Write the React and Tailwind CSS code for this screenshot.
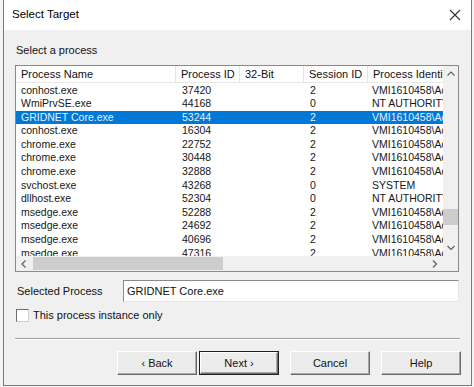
import React from "react";

const rows = [
  ["conhost.exe", "37420", "", "2", "VMI1610458\\Administrator"],
  ["WmiPrvSE.exe", "44168", "", "0", "NT AUTHORITY\\SYSTEM"],
  ["GRIDNET Core.exe", "53244", "", "2", "VMI1610458\\Administrator", true],
  ["conhost.exe", "16304", "", "2", "VMI1610458\\Administrator"],
  ["chrome.exe", "22752", "", "2", "VMI1610458\\Administrator"],
  ["chrome.exe", "30448", "", "2", "VMI1610458\\Administrator"],
  ["chrome.exe", "32888", "", "2", "VMI1610458\\Administrator"],
  ["svchost.exe", "43268", "", "0", "SYSTEM"],
  ["dllhost.exe", "52304", "", "0", "NT AUTHORITY\\SYSTEM"],
  ["msedge.exe", "52288", "", "2", "VMI1610458\\Administrator"],
  ["msedge.exe", "24692", "", "2", "VMI1610458\\Administrator"],
  ["msedge.exe", "40696", "", "2", "VMI1610458\\Administrator"],
  ["msedge.exe", "47316", "", "2", "VMI1610458\\Administrator"],
];

function Chevron({ dir }) {
  const pts = {
    up: "0.5,4.5 4,1 7.5,4.5",
    down: "0.5,1 4,4.5 7.5,1",
    left: "4.5,0.5 1,4 4.5,7.5",
    right: "1,0.5 4.5,4 1,7.5",
  }[dir];
  const horiz = dir === "left" || dir === "right";
  return (
    <svg width={horiz ? 6 : 8} height={horiz ? 8 : 6} viewBox={horiz ? "0 0 6 8" : "0 0 8 6"}>
      <polyline points={pts} fill="none" stroke="#606060" strokeWidth="1.2" />
    </svg>
  );
}

function Button({ children, def, className = "" }) {
  return (
    <div
      className={
        "w-[80px] h-[24px] flex " +
        (def ? "border border-[#202020] " : "") +
        className
      }
    >
      <div className="flex-1 flex items-center justify-center bg-[#ececec] border-t border-l border-white border-b border-r border-b-[#6a6a6a] border-r-[#6a6a6a] shadow-[inset_-1px_-1px_0_#a8a8a8] text-[11px] text-[#111]">
        {children}
      </div>
    </div>
  );
}

export default function App() {
  const colW = ["w-[160px]", "w-[64px]", "w-[64px]", "w-[64px]", "w-[90px]"];
  return (
    <div
      className="w-[474px] h-[387px] flex bg-[#f4f4f4] overflow-hidden"
      style={{ fontFamily: '"Liberation Sans", Arial, sans-serif' }}
    >
      <div className="w-[3px] shrink-0 bg-[#f4f4f4]" />
      <div className="w-[469px] h-[386px] shrink-0 flex flex-col border-l border-r border-b border-[#7a7a7a]">
        {/* Title bar */}
        <div className="h-[30px] bg-white flex items-center justify-between pl-[8px] pr-[10px]">
          <span className="text-[11.5px] text-black">Select Target</span>
          <svg width="12" height="12" viewBox="0 0 12 12">
            <path d="M1 1 L11 11 M11 1 L1 11" stroke="#333" strokeWidth="1.1" />
          </svg>
        </div>
        {/* Body */}
        <div className="flex-1 bg-[#f0f0f0] flex flex-col pl-[11px] pr-[10px]">
          <div className="mt-[13px] h-[14px] leading-[14px] text-[11px] text-[#111] pl-[1px]">
            Select a process
          </div>
          {/* List box */}
          <div className="mt-[8px] w-[444px] h-[207px] border border-[#8a8a8a] bg-white flex flex-col">
            <div className="flex h-[190px]">
              <div className="w-[427px] overflow-hidden flex flex-col">
                {/* Header */}
                <div className="flex h-[17px] shrink-0 border-b border-[#e8e8e8] text-[11px] text-[#111]">
                  {["Process Name", "Process ID", "32-Bit", "Session ID", "Process Identity"].map(
                    (h, i) => (
                      <div
                        key={h}
                        className={
                          colW[i] +
                          " shrink-0 flex items-center whitespace-nowrap overflow-hidden border-r border-[#e3e3e3] " +
                          (i === 0 ? "pl-[5px]" : "pl-[5px]")
                        }
                      >
                        {h}
                      </div>
                    )
                  )}
                </div>
                {/* Rows */}
                <div className="pt-[0.5px]">
                  {rows.map((r, idx) => {
                    const sel = r[5];
                    return (
                      <div
                        key={idx}
                        className={
                          "flex h-[13.6px] text-[10.5px] leading-[13.6px] whitespace-nowrap " +
                          (sel ? "bg-[#0078d7] text-[#e4f1fc]" : "text-[#161616]")
                        }
                      >
                        {r.slice(0, 5).map((c, i) => (
                          <div
                            key={i}
                            className={colW[i] + " shrink-0 overflow-hidden " + (i === 0 ? "pl-[5px]" : i === 4 ? "pl-[4px]" : "pl-[6px]")}
                          >
                            {c}
                          </div>
                        ))}
                      </div>
                    );
                  })}
                </div>
              </div>
              {/* Vertical scrollbar */}
              <div className="w-[15px] bg-[#f0f0f0] flex flex-col">
                <div className="h-[17px] flex items-center justify-center pb-[2px]">
                  <Chevron dir="up" />
                </div>
                <div className="flex-1 flex flex-col">
                  <div className="h-[126px]" />
                  <div className="h-[16px] bg-[#cdcdcd]" />
                </div>
                <div className="h-[17px] flex items-center justify-center">
                  <Chevron dir="down" />
                </div>
              </div>
            </div>
            {/* Horizontal scrollbar */}
            <div className="flex h-[15px]">
              <div className="w-[427px] bg-[#f0f0f0] flex items-center">
                <div className="w-[16px] flex items-center justify-center">
                  <Chevron dir="left" />
                </div>
                <div className="ml-[1px] w-[190px] h-[13px] bg-[#cdcdcd]" />
                <div className="flex-1" />
                <div className="w-[16px] flex items-center justify-center">
                  <Chevron dir="right" />
                </div>
              </div>
              <div className="w-[15px] bg-[#f0f0f0]" />
            </div>
          </div>
          {/* Selected process */}
          <div className="mt-[8px] flex items-center h-[22px]">
            <div className="w-[108px] pl-[2px] text-[11px] text-[#111]">Selected Process</div>
            <div className="w-[336px] h-[22px] bg-white border-t border-l border-[#8a8a8a] border-b border-r border-b-[#e6e6e6] border-r-[#e6e6e6] flex items-start pt-[2px] pl-[3px] text-[11px] text-[#111]">
              GRIDNET Core.exe
            </div>
          </div>
          {/* Checkbox */}
          <div className="mt-[7px] flex items-center h-[13px] pl-[1px]">
            <div className="w-[13px] h-[13px] bg-white border-t border-l border-[#6e6e6e] border-b border-r border-b-[#d0d0d0] border-r-[#d0d0d0]" />
            <span className="ml-[4px] text-[11px] text-[#111]">This process instance only</span>
          </div>
          {/* Separator */}
          <div className="mt-[16px] w-[445px] h-[2px] flex flex-col">
            <div className="h-[1px] bg-[#a0a0a0]" />
            <div className="h-[1px] bg-white" />
          </div>
          {/* Buttons */}
          <div className="mt-[11px] flex justify-end">
            <Button>&lsaquo; Back</Button>
            <Button def className="ml-[2px]">Next &rsaquo;</Button>
            <Button className="ml-[11px]">Cancel</Button>
            <Button className="ml-[11px]">Help</Button>
          </div>
        </div>
      </div>
      <div className="flex-1 bg-[#f4f4f4]" />
    </div>
  );
}
